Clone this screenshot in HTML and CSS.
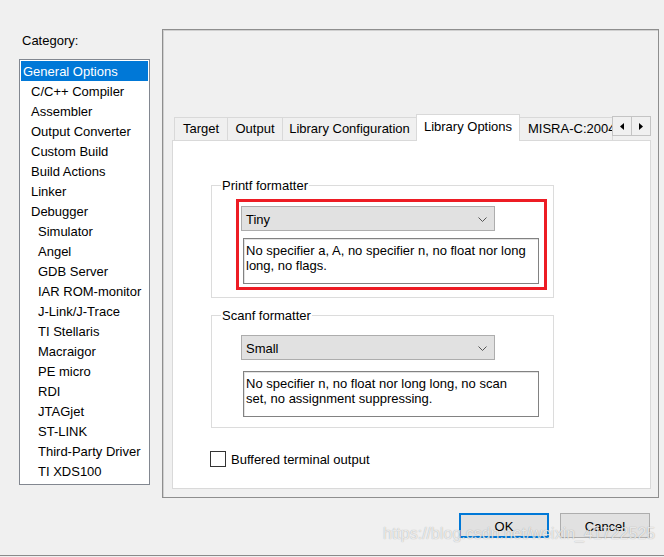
FILE: index.html
```html
<!DOCTYPE html>
<html lang="en">
<head>
  <meta charset="UTF-8">
  <title>Options</title>
  <link rel="stylesheet" href="styles.css">
</head>
<body>
  <div class="dialog">
    <div class="top">
      <div class="category">
        <div class="category-label">Category:</div>
        <ul class="category-list">
          <li class="selected">General Options</li>
          <li>C/C++ Compiler</li>
          <li>Assembler</li>
          <li>Output Converter</li>
          <li>Custom Build</li>
          <li>Build Actions</li>
          <li>Linker</li>
          <li>Debugger</li>
          <li class="sub">Simulator</li>
          <li class="sub">Angel</li>
          <li class="sub">GDB Server</li>
          <li class="sub">IAR ROM-monitor</li>
          <li class="sub">J-Link/J-Trace</li>
          <li class="sub">TI Stellaris</li>
          <li class="sub">Macraigor</li>
          <li class="sub">PE micro</li>
          <li class="sub">RDI</li>
          <li class="sub">JTAGjet</li>
          <li class="sub">ST-LINK</li>
          <li class="sub">Third-Party Driver</li>
          <li class="sub">TI XDS100</li>
        </ul>
      </div>

      <div class="options-panel">
        <div class="tabs">
          <div class="tab tab-target">Target</div>
          <div class="tab tab-output">Output</div>
          <div class="tab tab-libconf">Library Configuration</div>
          <div class="tab tab-libopt active">Library Options</div>
          <div class="tab tab-misra">MISRA-C:2004</div>
          <div class="tab-scroll">
            <span class="scroll-btn">
              <svg width="4" height="7" viewBox="0 0 4 7"><path d="M4 0 L0 3.5 L4 7 Z" fill="#000"/></svg>
            </span>
            <span class="scroll-btn">
              <svg width="4" height="7" viewBox="0 0 4 7"><path d="M0 0 L4 3.5 L0 7 Z" fill="#000"/></svg>
            </span>
          </div>
        </div>

        <div class="tab-pane">
          <fieldset class="group group-printf">
            <legend>Printf formatter</legend>
            <div class="select">
              <span>Tiny</span>
              <svg width="9" height="5" viewBox="0 0 9 5"><path d="M0.5 0.5 L4.5 4.5 L8.5 0.5" fill="none" stroke="#555"/></svg>
            </div>
            <div class="desc">No specifier a, A, no specifier n, no float nor long<br>long, no flags.</div>
          </fieldset>

          <fieldset class="group group-scanf">
            <legend>Scanf formatter</legend>
            <div class="select">
              <span>Small</span>
              <svg width="9" height="5" viewBox="0 0 9 5"><path d="M0.5 0.5 L4.5 4.5 L8.5 0.5" fill="none" stroke="#555"/></svg>
            </div>
            <div class="desc">No specifier n, no float nor long long, no scan<br>set, no assignment suppressing.</div>
          </fieldset>

          <label class="check">
            <span class="check-box"></span>
            Buffered terminal output
          </label>

          <!-- red mark around the printf choice -->
          <div class="highlight"></div>
        </div>
      </div>
    </div>

    <div class="buttons">
      <button class="btn btn-default">OK</button>
      <button class="btn">Cancel</button>
    </div>

    <div class="watermark">https://blog.csdn.net/weixin_41722525</div>
  </div>
</body>
</html>
```

FILE: styles.css
```css
body {
  margin: 0;
  background-color: #f0f0f0;
  font-family: "Liberation Sans", Arial, sans-serif;
  font-size: 13px;
  color: #000;
}
.dialog {
  position: relative;
  height: 555px;
  border-bottom: 1px solid #8a8a8a;
  display: flex;
  flex-direction: column;
}
.top {
  display: flex;
  align-items: flex-start;
  padding-top: 29px;
}
.category {
  margin-left: 19px;
  width: 131px;
}
.category-label {
  margin: 4px 0 0 3px;
  line-height: 15px;
}
.category-list {
  list-style: none;
  margin: 11px 0 0;
  padding: 1px;
  height: 426px;
  box-sizing: border-box;
  border: 1px solid #828790;
  background-color: #fff;
}
.category-list li {
  height: 19px;
  padding-top: 1px;
  line-height: 20px;
  padding-left: 10px;
  white-space: nowrap;
}
.category-list li.selected {
  background-color: #0078d7;
  color: #fff;
  padding-left: 2px;
}
.category-list li.sub {
  padding-left: 17px;
}

.options-panel {
  margin-left: 12px;
  width: 497px;
  height: 469px;
  box-sizing: border-box;
  border: 1px solid #8e8e8e;
  box-shadow: inset 1px 1px 0 #d0d0d0;
  padding: 84px 7px 0 9px;
}
.tabs {
  display: flex;
  align-items: flex-end;
  height: 26px;
  padding-left: 2px;
  position: relative;
  z-index: 1;
}
.tab {
  height: 23px;
  box-sizing: border-box;
  border: 1px solid #d9d9d9;
  border-bottom: none;
  margin-right: -1px;
  line-height: 22px;
  text-align: center;
  white-space: nowrap;
  overflow: hidden;
  background-color: #f0f0f0;
}
.tab.active {
  height: 27px;
  line-height: 24px;
  margin-bottom: -1px;
  background-color: #fff;
}
.tab-target { width: 54px; }
.tab-output { width: 56px; }
.tab-libconf { width: 135px; }
.tab-libopt { width: 104px; }
.tab-misra {
  width: 94px;
  text-align: left;
  padding-left: 8px;
  box-sizing: border-box;
}
.tab-scroll {
  display: flex;
  align-self: flex-start;
  margin-top: 2px;
}
.scroll-btn {
  width: 20px;
  height: 20px;
  box-sizing: border-box;
  border: 1px solid #c4c4c4;
  margin-right: -1px;
  background-color: #f0f0f0;
  display: flex;
  align-items: center;
  justify-content: center;
}

.tab-pane {
  position: relative;
  height: 349px;
  box-sizing: border-box;
  border: 1px solid #d9d9d9;
  background-color: #fff;
}
.group {
  width: 343px;
  min-width: 0;
  box-sizing: border-box;
  margin: 37px 0 0 38px;
  padding: 0 0 13px;
  border: 1px solid #dcdcdc;
}
.group legend {
  margin-left: 9px;
  padding: 0 1px;
  line-height: 15px;
}
.select {
  margin: 13px 0 0 29px;
  width: 254px;
  height: 25px;
  box-sizing: border-box;
  border: 1px solid #adadad;
  background-color: #e1e1e1;
  display: flex;
  align-items: center;
  justify-content: space-between;
  padding: 1px 7px 0 4px;
}
.desc {
  margin: 7px 0 0 31px;
  width: 296px;
  height: 46px;
  box-sizing: border-box;
  border: 1px solid #828282;
  box-shadow: inset 1px 1px 0 #e3e3e3;
  padding: 4px 0 0 2px;
  line-height: 15px;
  white-space: nowrap;
}
.group-scanf {
  margin-top: 10px;
  padding-bottom: 10px;
}
.group-scanf .select {
  margin-top: 12px;
}
.group-scanf .desc {
  margin-top: 11px;
}
.check {
  display: flex;
  align-items: center;
  gap: 5px;
  margin: 23px 0 0 37px;
  line-height: 15px;
}
.check-box {
  width: 16px;
  height: 16px;
  box-sizing: border-box;
  border: 1px solid #333;
  background-color: #fff;
}
.highlight {
  position: absolute;
  left: 63px;
  top: 58px;
  width: 311px;
  height: 91px;
  box-sizing: border-box;
  border: 3px solid #ed1c24;
}

.buttons {
  display: flex;
  justify-content: flex-end;
  gap: 11px;
  margin-top: 15px;
  padding-right: 14px;
}
.btn {
  width: 90px;
  height: 25px;
  box-sizing: border-box;
  padding: 1px 0 0;
  border: 1px solid #adadad;
  background-color: #e1e1e1;
  font-family: inherit;
  font-size: 13px;
  color: #000;
}
.btn-default {
  border: 2px solid #0078d7;
}
.watermark {
  position: absolute;
  left: 383px;
  top: 525px;
  font-size: 16px;
  line-height: 18px;
  color: rgba(255, 255, 255, 0.75);
  text-shadow: 0 0 1px rgba(0, 0, 0, 0.35);
  white-space: nowrap;
}
```
